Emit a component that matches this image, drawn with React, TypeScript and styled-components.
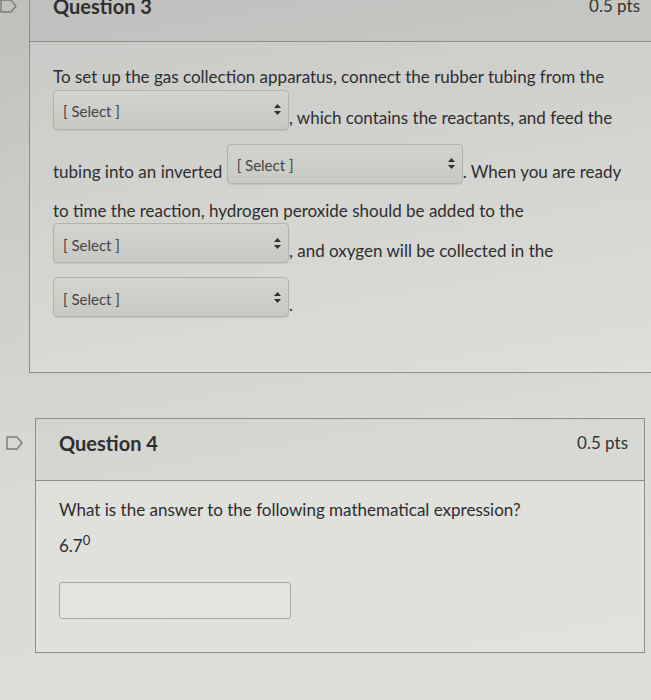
import styled, { createGlobalStyle } from 'styled-components';

const GlobalStyle = createGlobalStyle`
  html, body {
    margin: 0;
    padding: 0;
  }
  body {
    font-family: Lato, "Open Sans", "Liberation Sans", sans-serif;
    color: #2e2e2e;
    background: linear-gradient(170deg, #bfbfbc 0%, #cfcfcb 35%, #dbdbd7 65%, #dcdcd8 100%);
    min-height: 700px;
    overflow: hidden;
  }
`

const Page = styled.div`
  display: flex;
  flex-direction: column;
  gap: 45px;
  margin-top: -19px;
  padding-bottom: 48px;
`

const Row = styled.div<{ $indent: number; $right: number }>`
  display: flex;
  align-items: flex-start;
  padding-left: ${(p) => p.$indent}px;
  margin-right: ${(p) => p.$right}px;
`

const FlagSlot = styled.div`
  flex: 0 0 29px;
  padding-top: 16px;
  color: #7b7b78;
`

const Card = styled.section`
  flex: 1;
  border: 1px solid #8d8d8a;
  background: rgba(255, 255, 255, 0.14);
`

const Header = styled.header<{ $below: number }>`
  display: flex;
  justify-content: space-between;
  align-items: center;
  padding: 11px 16px ${(p) => p.$below}px 23px;
  border-bottom: 1px solid #8d8d8a;
  background: rgba(0, 0, 0, 0.035);
  line-height: 26px;
`

const Title = styled.h2`
  margin: 0;
  font-size: 20px;
  font-weight: 700;
  color: #2f2f2f;
`

const Points = styled.span`
  font-size: 17px;
  color: #333;
`

const Body = styled.div<{ $bottom: number }>`
  padding: 16px 22px ${(p) => p.$bottom}px 23px;
  font-size: 17px;
  line-height: 25.6px;
`

const Text = styled.p<{ $top?: number }>`
  margin: ${(p) => p.$top ?? 0}px 0 0;
`

// inline dropdown; its baseline is the label's, so the shift keeps the box
// bottom a few pixels under the surrounding text
const SelectBox = styled.span`
  display: inline-flex;
  align-items: center;
  justify-content: space-between;
  box-sizing: border-box;
  width: 236px;
  height: 40px;
  padding: 3px 7px 0 9px;
  margin-bottom: 14px;
  vertical-align: 6px;
  border: 1px solid #b1b1ad;
  border-radius: 4px;
  background: linear-gradient(#d3d3cf, #c8c8c4);
  box-shadow: 0 1px 1px rgba(0, 0, 0, 0.08);
  font-size: 15px;
  line-height: 20px;
  color: #454545;

  svg {
    margin-top: -3px;
  }
`

const AnswerInput = styled.div`
  width: 232px;
  height: 37px;
  box-sizing: border-box;
  margin-top: 24px;
  border: 1px solid #a7a7a3;
  border-radius: 3px;
  background: rgba(255, 255, 255, 0.1);
`

const Sup = styled.sup`
  font-size: 13px;
  vertical-align: 7px;
  line-height: 0;
`

function Flag() {
  return (
    <svg width="17" height="14" viewBox="0 0 17 14" fill="none">
      <path d="M1 1H11L16 7L11 13H1Z" stroke="currentColor" strokeWidth="1.4" strokeLinejoin="round" />
    </svg>
  );
}

function Arrows() {
  return (
    <svg width="7" height="11" viewBox="0 0 7 11">
      <path d="M3.5 0L7 4H0Z M3.5 11L0 7H7Z" fill="#2f2f2f" />
    </svg>
  );
}

function Select() {
  return (
    <SelectBox>
      <span>[ Select ]</span>
      <Arrows />
    </SelectBox>
  );
}

export default function App() {
  return (
    <>
      <GlobalStyle />
      <Page>
        <Row $indent={0} $right={-6}>
          <FlagSlot>
            <Flag />
          </FlagSlot>
          <Card>
            <Header $below={22}>
              <Title>Question 3</Title>
              <Points>0.5 pts</Points>
            </Header>
            <Body $bottom={41}>
              <Text $top={6}>
                To set up the gas collection apparatus, connect the rubber tubing from the{' '}
                <Select />, which contains the reactants, and feed the tubing into an inverted{' '}
                <Select />. When you are ready to time the reaction, hydrogen peroxide should be
                added to the <Select />, and oxygen will be collected in the <Select />.
              </Text>
            </Body>
          </Card>
        </Row>

        <Row $indent={6} $right={6}>
          <FlagSlot>
            <Flag />
          </FlagSlot>
          <Card>
            <Header $below={24}>
              <Title>Question 4</Title>
              <Points>0.5 pts</Points>
            </Header>
            <Body $bottom={33}>
              <Text>What is the answer to the following mathematical expression?</Text>
              <Text $top={10}>
                6.7<Sup>0</Sup>
              </Text>
              <AnswerInput />
            </Body>
          </Card>
        </Row>
      </Page>
    </>
  );
}
